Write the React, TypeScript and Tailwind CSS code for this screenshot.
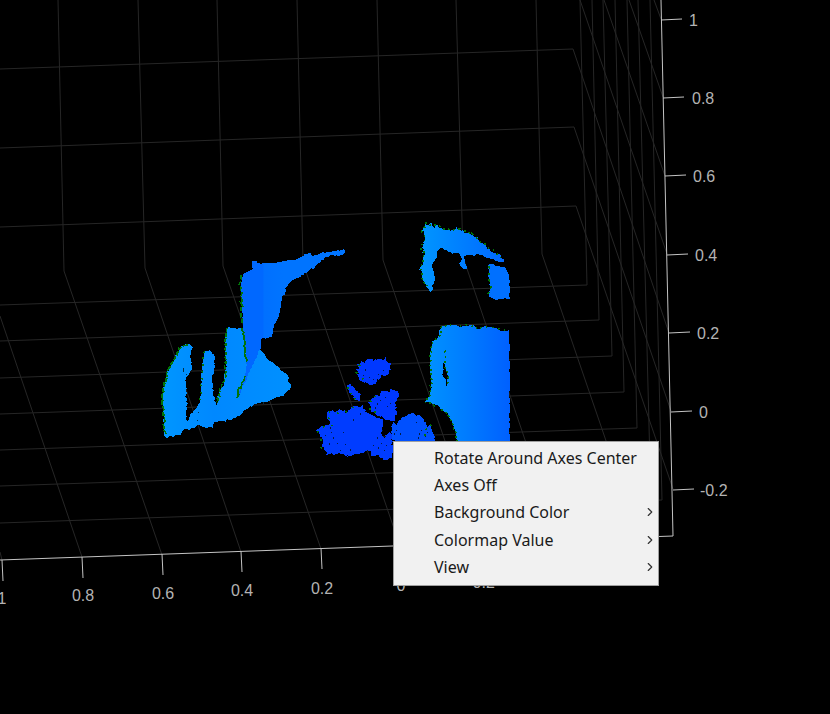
import { ChevronRight } from "lucide-react";

type Point = [number, number];

type CloudProps = {
  points: string;
  fill: string;
  seed: number;
  rough?: number;
};

type MenuEntry = {
  label: string;
  submenu?: boolean;
};

const menuEntries: MenuEntry[] = [
  { label: "Rotate Around Axes Center" },
  { label: "Axes Off" },
  { label: "Background Color", submenu: true },
  { label: "Colormap Value", submenu: true },
  { label: "View", submenu: true },
];

// x1, y1, x2, y2
const gridLines = [
  // back wall
  [0, 69, 573, 49],
  [0, 148, 574, 127],
  [0, 227, 576, 206],
  [58, 0, 64, 271],
  [138, 0, 145, 268],
  [217, 0, 223, 266],
  [297, 0, 303, 263],
  [377, 0, 383, 260],
  [456, 0, 463, 257],
  [536, 0, 542, 254],
  // floor
  [0, 305, 587, 285],
  [0, 341, 599, 320],
  [0, 378, 612, 356],
  [0, 414, 624, 392],
  [0, 450, 637, 428],
  [0, 486, 650, 464],
  [0, 523, 662, 500],
  [0, 552, 2, 560],
  [0, 316, 82, 557],
  [64, 271, 162, 555],
  [145, 268, 241, 552],
  [223, 266, 321, 549],
  [303, 263, 400, 546],
  [383, 260, 480, 543],
  [463, 257, 559, 540],
  [542, 254, 639, 537],
  // side wall
  [580, 0, 587, 285],
  [592, 0, 599, 320],
  [603, 0, 612, 356],
  [615, 0, 624, 392],
  [627, 0, 637, 428],
  [638, 0, 650, 464],
  [650, 0, 662, 500],
  [654, 0, 661, 19],
  [629, 0, 663, 97],
  [604, 0, 665, 176],
  [580, 0, 667, 254],
  [573, 49, 669, 333],
  [574, 127, 671, 411],
  [576, 206, 673, 489],
];

const bottomTicks = [
  { x: 2, y: 560, label: "1", labelX: 2, labelY: 604 },
  { x: 82, y: 557, label: "0.8", labelX: 83, labelY: 601 },
  { x: 162, y: 554, label: "0.6", labelX: 163, labelY: 599 },
  { x: 241, y: 551, label: "0.4", labelX: 242, labelY: 596 },
  { x: 321, y: 548, label: "0.2", labelX: 322, labelY: 594 },
  { x: 400, y: 546, label: "0", labelX: 401, labelY: 591 },
  { x: 480, y: 543, label: "-0.2", labelX: 481, labelY: 588 },
];

const sideTicks = [
  { x: 661, y: 19, label: "1", labelX: 689 },
  { x: 663, y: 97, label: "0.8", labelX: 692 },
  { x: 665, y: 175, label: "0.6", labelX: 693 },
  { x: 667, y: 254, label: "0.4", labelX: 695 },
  { x: 669, y: 332, label: "0.2", labelX: 697 },
  { x: 671, y: 411, label: "0", labelX: 699 },
  { x: 673, y: 489, label: "-0.2", labelX: 700 },
];

function parse(points: string): Point[] {
  return points.split(" ").map((p) => p.split(",").map(Number) as Point);
}

// small repeatable noise so the scan edges keep the same shape on each render
function noise(seed: number) {
  let s = seed;
  return () => {
    s = (s * 16807) % 2147483647;
    return s / 2147483647 - 0.5;
  };
}

function ragged(list: Point[], seed: number, rough: number, closed: boolean) {
  const rand = noise(seed * 7919);
  const out: string[] = [];
  const count = closed ? list.length : list.length - 1;
  for (let i = 0; i < count; i++) {
    const [ax, ay] = list[i];
    const [bx, by] = list[(i + 1) % list.length];
    const steps = Math.max(1, Math.round(Math.hypot(bx - ax, by - ay) / 6));
    for (let k = 0; k < steps; k++) {
      const t = k / steps;
      const x = ax + (bx - ax) * t + rand() * rough;
      const y = ay + (by - ay) * t + rand() * rough;
      out.push(`${x.toFixed(1)},${y.toFixed(1)}`);
    }
  }
  return out.join(" ");
}

function Cloud({ points, fill, seed, rough = 6 }: CloudProps) {
  return <polygon points={ragged(parse(points), seed, rough, true)} fill={fill} />;
}

function Fringe({ points, seed, dash }: { points: string; seed: number; dash?: string }) {
  return (
    <polyline
      points={ragged(parse(points), seed, 7, false)}
      fill="none"
      stroke="#007408"
      strokeWidth="5"
      strokeDasharray={dash}
    />
  );
}

function Speckles({ points, fill }: { points: string; fill: string }) {
  return (
    <g fill={fill}>
      {parse(points).map(([x, y]) => (
        <rect key={`${x}-${y}`} x={x} y={y} width="3" height="4" />
      ))}
    </g>
  );
}

function PointCloud() {
  return (
    <g shapeRendering="crispEdges">
      {/* arm and hand */}
      <g transform="translate(150 240) scale(0.33333)">
        <Cloud
          seed={3}
          fill="url(#hand)"
          points="230,262 278,266 300,300 331,325 345,345 375,375 410,402 415,422 427,436 415,452 400,466 370,478 345,488 325,487 300,500 265,528 240,540 205,545 192,545 190,562 165,562 150,555 120,570 103,565 95,580 75,588 45,592 42,560 38,500 37,460 45,430 50,400 62,375 80,340 100,315 115,311 127,320 122,350 123,390 108,415 110,440 108,470 112,490 108,530 115,545 120,525 140,505 150,485 153,440 155,400 160,350 162,332 178,332 195,350 195,375 187,410 190,450 195,485 200,495 205,465 222,435 228,380 225,330"
        />
        <Cloud
          seed={5}
          rough={4}
          fill="url(#arm)"
          points="305,63 320,63 322,70 380,68 440,57 470,41 484,42 486,50 520,38 570,31 580,28 587,37 575,46 540,46 515,60 500,75 490,88 480,85 475,95 445,112 418,127 408,140 405,162 395,170 395,200 385,235 370,258 366,290 335,297 331,325 315,360 300,395 278,440 264,478 270,440 285,410 290,370 288,330 278,290 277,200 272,130 280,103 300,92 308,88"
        />
        <Fringe seed={7} dash="14 4" points="274,105 268,130 273,160 275,200 277,262" />
        <Fringe seed={8} points="277,266 283,300 284,330 290,370" />
        <Fringe seed={9} points="284,405 275,435 264,450 262,478" />
        <Fringe seed={10} dash="12 4" points="230,264 227,300 226,340 228,370 224,420 208,460 201,495" />
        <Fringe seed={12} dash="16 4" points="112,312 90,325 70,360 52,395 46,425 38,460 39,510 42,550 46,590" />
        <Fringe seed={13} dash="6 16" points="162,334 155,400 153,440 148,490" />
        <Speckles fill="#003048" points="98,385 99,391 145,516 140,540 108,402 338,487" />
      </g>

      {/* scattered objects on the floor */}
      <g transform="translate(310 350) scale(0.33333)">
        <Cloud
          seed={21}
          rough={12}
          fill="#0038ff"
          points="150,42 178,28 195,32 200,25 225,27 240,40 243,60 232,72 215,75 200,95 180,102 160,92 145,78 140,60"
        />
        <Cloud
          seed={22}
          rough={8}
          fill="#0038ff"
          points="112,112 122,102 130,112 135,122 150,135 152,150 142,155 130,140 117,125"
        />
        <Cloud
          seed={23}
          rough={12}
          fill="#0038ff"
          points="180,150 195,140 215,128 235,122 250,115 265,128 263,140 255,148 262,170 260,190 250,212 235,212 215,200 195,190 182,178 178,160"
        />
        <Cloud
          seed={24}
          rough={10}
          fill="#003cff"
          points="52,185 90,180 110,188 130,170 155,165 170,185 200,200 222,212 220,235 205,250 225,262 235,245 248,255 250,325 225,327 205,318 180,320 175,298 150,308 110,318 80,310 50,312 38,300 35,270 22,240 35,228 65,225 55,205"
        />
        <Cloud
          seed={25}
          rough={8}
          fill="#0050ff"
          points="265,215 280,200 305,192 330,198 345,215 350,230 362,225 365,245 375,260 375,285 265,285 245,262 242,230 248,212 258,225"
        />
        <Fringe seed={26} dash="5 22" points="150,42 140,60 145,78 160,92 180,102" />
        <Fringe seed={27} dash="5 16" points="112,112 130,140 142,155" />
        <Fringe seed={28} dash="5 20" points="195,140 180,150 182,178 215,200" />
        <Fringe seed={29} dash="5 24" points="130,170 110,188 55,185 55,205 65,225 22,240 35,270 38,300 50,312" />
        <Fringe seed={30} dash="5 14" points="362,225 350,235 345,250 338,270" />
        <Speckles
          fill="#001c48"
          points="165,58 178,80 190,86 205,72 160,75 220,60 210,150 200,160 225,140 240,158 195,172 232,168 62,245 68,262 45,255 82,278 98,245 90,300 120,298 105,282 57,280 130,208 150,190 215,240 200,262 212,278 205,292 228,285 222,300 190,285 258,240 252,250 318,215 333,240 328,250 325,262 350,245 345,258 270,250 60,232"
        />
      </g>

      {/* wall frame and cabinet */}
      <g transform="translate(410 210) scale(0.33333)">
        <Cloud
          seed={31}
          rough={8}
          fill="url(#frame)"
          points="38,55 50,42 65,42 72,52 85,48 100,58 120,62 140,53 160,62 190,75 215,97 245,122 283,147 283,158 262,155 240,145 215,137 165,135 165,150 172,175 160,175 145,160 155,150 152,132 130,130 95,118 80,120 78,150 68,155 65,175 75,190 72,215 68,225 67,243 55,243 50,225 38,210 32,180 40,150 42,130 35,110 45,80"
        />
        <Cloud
          seed={32}
          rough={4}
          fill="#0070ff"
          points="237,162 262,167 285,172 298,195 299,270 285,266 260,270 237,258 240,225 235,200"
        />
        <Cloud
          seed={33}
          rough={3}
          fill="url(#cabinet)"
          points="88,365 95,350 120,342 150,350 190,345 205,358 225,348 255,353 280,365 297,362 299,450 299,705 140,705 138,665 125,635 112,610 95,600 82,585 60,578 45,575 60,555 65,520 60,480 60,430 68,395 85,385"
        />
        <Cloud seed={34} fill="#000000" points="103,460 108,485 115,495 110,532 108,505 98,498" />
        <Fringe seed={35} dash="5 10" points="150,55 120,62 85,48 50,42 38,60 45,80 35,110 42,130 32,180 38,210 50,225 55,243" />
        <Fringe seed={36} dash="5 12" points="150,55 190,75 215,97 245,120 280,145" />
        <Fringe seed={37} dash="8 14" points="237,165 235,200 240,225 237,258" />
        <Fringe seed={38} dash="6 9" points="125,343 95,350 88,380 68,395 60,430 62,480 65,520 60,555 45,575 80,590" />
        <Fringe seed={39} dash="6 8" points="95,600 112,610 125,635 138,665 140,700" />
        <Fringe seed={40} dash="6 12" points="104,420 104,470 113,485 114,530" />
        <Fringe seed={41} dash="5 14" points="150,350 190,345 205,358 225,348 255,353 297,362" />
      </g>
    </g>
  );
}

function Axes3D() {
  return (
    <svg
      viewBox="0 0 830 714"
      className="block h-auto w-full"
      role="img"
      aria-label="Point cloud"
      fontFamily='"Liberation Sans", Arial, sans-serif'
      fontSize="16"
    >
      <defs>
        <linearGradient id="arm" gradientUnits="userSpaceOnUse" x1="270" y1="100" x2="400" y2="100">
          <stop offset="0" stopColor="#0068ff" />
          <stop offset="0.52" stopColor="#0068ff" />
          <stop offset="0.56" stopColor="#0070ff" />
          <stop offset="1" stopColor="#0074ff" />
        </linearGradient>
        <linearGradient id="hand" gradientUnits="userSpaceOnUse" x1="40" y1="0" x2="420" y2="0">
          <stop offset="0" stopColor="#0096ff" />
          <stop offset="0.4" stopColor="#0088ff" />
          <stop offset="1" stopColor="#0090ff" />
        </linearGradient>
        <linearGradient id="frame" gradientUnits="userSpaceOnUse" x1="40" y1="0" x2="280" y2="0">
          <stop offset="0" stopColor="#0094ff" />
          <stop offset="1" stopColor="#0068ff" />
        </linearGradient>
        <linearGradient id="cabinet" gradientUnits="userSpaceOnUse" x1="60" y1="0" x2="300" y2="0">
          <stop offset="0" stopColor="#0090ff" />
          <stop offset="0.45" stopColor="#007cff" />
          <stop offset="1" stopColor="#0060ff" />
        </linearGradient>
      </defs>

      <g stroke="#262626" strokeWidth="1">
        {gridLines.map(([x1, y1, x2, y2]) => (
          <line key={`${x1}-${y1}-${x2}-${y2}`} x1={x1} y1={y1} x2={x2} y2={y2} />
        ))}
      </g>

      <g stroke="#c4c4c4" strokeWidth="1" fill="none">
        <path d="M0 560 L673 536 L661 0" />
        {bottomTicks.map((t) => (
          <line key={t.label} x1={t.x} y1={t.y} x2={t.x + 1} y2={t.y + 21} />
        ))}
        {sideTicks.map((t) => (
          <line key={t.label} x1={t.x} y1={t.y + 1} x2={t.x + 21} y2={t.y} />
        ))}
      </g>

      <g fill="#b3b3b3">
        {bottomTicks.map((t) => (
          <text key={t.label} x={t.labelX} y={t.labelY} textAnchor="middle">
            {t.label}
          </text>
        ))}
        {sideTicks.map((t) => (
          <text key={t.label} x={t.labelX} y={t.y + 7}>
            {t.label}
          </text>
        ))}
      </g>

      <PointCloud />
    </svg>
  );
}

function ContextMenu() {
  return (
    <div
      role="menu"
      className="absolute left-[393px] top-[441px] grid h-[145px] w-[266px] grid-rows-5 border border-[#a0a0a0] bg-[#f1f1f1] pt-0.5 pb-1 font-['Noto_Sans',sans-serif] text-base text-[#1a1a1a]"
    >
      {menuEntries.map((entry) => (
        <button
          key={entry.label}
          type="button"
          role="menuitem"
          className="flex items-center justify-between pl-10 pr-px text-left leading-5 whitespace-nowrap hover:bg-white"
        >
          {entry.label}
          {entry.submenu && <ChevronRight className="size-3.5 text-[#333]" strokeWidth={2} />}
        </button>
      ))}
    </div>
  );
}

export default function App() {
  return (
    <main className="relative min-h-screen w-full overflow-hidden bg-black">
      <Axes3D />
      <ContextMenu />
    </main>
  );
}
